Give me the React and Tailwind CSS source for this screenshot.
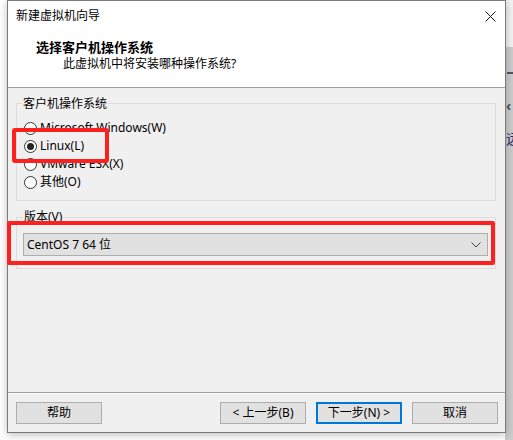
import React from 'react'

const font = "font-['Noto_Sans','Noto_Sans_CJK_SC',sans-serif]"

const Radio = ({ checked, label }) => (
  <div className="flex items-center h-[18px] pl-[7px]">
    <span className="w-[13px] h-[13px] rounded-full border border-[#333] bg-white flex items-center justify-center">
      {checked && <span className="w-[7px] h-[7px] rounded-full bg-[#222]" />}
    </span>
    <span className="ml-[3px] text-[12px] leading-[16px] text-black">{label}</span>
  </div>
)

const Btn = ({ children, primary }) => (
  <button
    className={`w-[86px] h-[22px] bg-[#e1e1e1] text-[12px] leading-[16px] text-black flex items-center justify-center ${
      primary ? 'border-2 border-[#0078d7]' : 'border border-[#adadad]'
    }`}>
    {children}
  </button>
)

export default function App() {
  return (
    <div className={`${font} w-[513px] h-[440px] relative bg-white overflow-hidden`}>
      {/* desktop strip on the right */}
      <div className="absolute right-0 top-0 w-[8px] h-full bg-[#cccccc]">
        <div className="h-[47px] bg-[#f2f2f2]" />
        <span className="absolute left-[2px] top-[72px] w-[6px] h-[2px] bg-[#4a5866]" />
        <span className="absolute left-[1px] top-[99px] text-[#4a5866] text-[14px] leading-[14px] font-bold">‹</span>
        <span className="absolute left-[1px] top-[131px] text-[#2b2b6b] text-[14px] leading-[16px]">远</span>
      </div>

      {/* dialog window */}
      <div className="absolute left-[7px] top-0 w-[499px] h-[433px] border border-[#7a7a7a] bg-[#f0f0f0] flex flex-col shadow-[0_2px_8px_rgba(0,0,0,0.25)]">
        {/* title + header */}
        <div className="bg-white h-[87px] border-b border-[#a0a0a0] flex flex-col">
          <div className="h-[30px] flex items-center justify-between pl-[8px] pr-[10px]">
            <span className="text-[12px] leading-[16px] text-black">新建虚拟机向导</span>
            <svg width="11" height="11" viewBox="0 0 11 11" className="mr-[-1px]">
              <path d="M0.5 0.5 L10.5 10.5 M10.5 0.5 L0.5 10.5" stroke="#111" strokeWidth="1" />
            </svg>
          </div>
          <div className="pl-[28px] mt-[8px] text-[13px] leading-[16px] font-bold text-black">选择客户机操作系统</div>
          <div className="pl-[55px] mt-[1px] text-[12px] leading-[16px] text-black">此虚拟机中将安装哪种操作系统?</div>
        </div>

        {/* body */}
        <div className="h-[304px] flex flex-col pl-[8px] pr-[9px]">
          <div className="mt-[15px] h-[98px] border border-[#dcdcdc] flex flex-col">
            <span className="self-start ml-[5px] mt-[-8px] px-[1px] bg-[#f0f0f0] text-[12px] leading-[16px] text-black">客户机操作系统</span>
            <div className="mt-[7px] flex flex-col">
              <Radio label="Microsoft Windows(W)" />
              <Radio checked label="Linux(L)" />
              <Radio label="VMware ESX(X)" />
              <Radio label="其他(O)" />
            </div>
          </div>

          <div className="mt-[16px] h-[52px] border border-[#dcdcdc] flex flex-col">
            <span className="self-start ml-[6px] mt-[-9px] px-[1px] bg-[#f0f0f0] text-[12px] leading-[16px] text-black">版本(V)</span>
            <div className="mt-[8px] ml-[6px] w-[465px] h-[23px] bg-[#e1e1e1] border border-[#adadad] flex items-center justify-between pl-[3px] pr-[6px]">
              <span className="text-[12px] leading-[16px] text-black">CentOS 7 64 位</span>
              <svg width="10" height="6" viewBox="0 0 10 6">
                <path d="M0.5 0.5 L5 5 L9.5 0.5" fill="none" stroke="#444" strokeWidth="1" />
              </svg>
            </div>
          </div>
        </div>

        {/* footer */}
        <div className="flex-1 border-t border-[#a0a0a0] shadow-[inset_0_1px_0_#ffffff] flex items-start pt-[9px] pl-[8px] pr-[7px]">
          <Btn>帮助</Btn>
          <div className="ml-auto flex gap-[10px]">
            <Btn>&lt; 上一步(B)</Btn>
            <Btn primary>下一步(N) &gt;</Btn>
            <Btn>取消</Btn>
          </div>
        </div>
      </div>

      {/* red annotation boxes */}
      <div className="absolute left-[12px] top-[128px] w-[97px] h-[35px] border-4 border-[#fe1f1f] rounded-[3px]" />
      <div className="absolute left-[7px] top-[221px] w-[488px] h-[44px] border-4 border-[#fe1f1f] rounded-[2px]" />
    </div>
  )
}
